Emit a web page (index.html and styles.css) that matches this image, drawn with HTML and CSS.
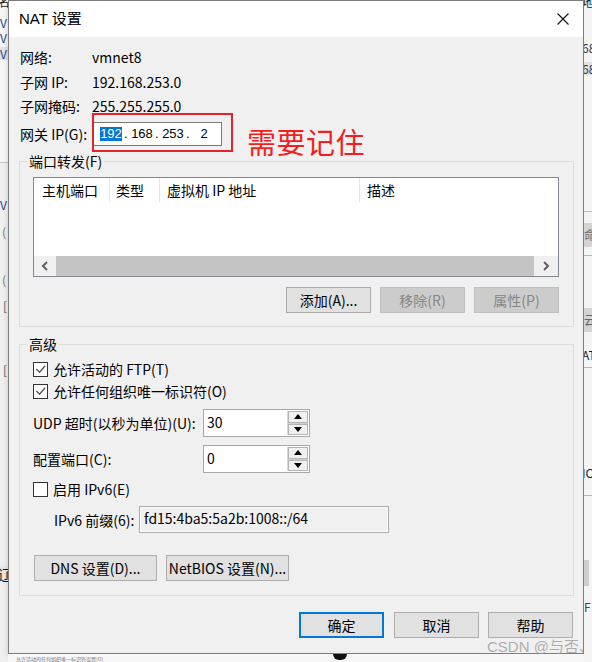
FILE: index.html
```html
<!DOCTYPE html>
<html lang="zh-CN">
<head>
<meta charset="utf-8">
<title>NAT 设置</title>
<link rel="stylesheet" href="styles.css">
</head>
<body>
<div class="desk">
  <div class="side side-l">
    <div class="bgtop">
      <div class="frag fl1">名</div>
      <div class="frag fl2">V</div>
      <div class="frag fl3">V</div>
      <div class="frag fl4 hl">V</div>
    </div>
    <div class="bgrest">
      <div class="frag fl5">V</div>
      <div class="frag fl6">(</div>
      <div class="frag fl7">(</div>
      <div class="frag fl8">[</div>
      <div class="frag fl9">[</div>
      <div class="frag fl10">辽</div>
    </div>
  </div>

  <div class="mid">
    <div class="dialog">
      <div class="titlebar">
        <span class="title">NAT 设置</span>
        <svg class="close" viewBox="0 0 12 12" width="12" height="12"><path d="M0.5 0.5L11.5 11.5M11.5 0.5L0.5 11.5" stroke="#111" stroke-width="1.1" fill="none"/></svg>
      </div>

      <div class="content">
        <div class="info">
          <div class="row r1"><span class="lbl">网络:</span><span>vmnet8</span></div>
          <div class="row r2"><span class="lbl">子网 IP:</span><span>192.168.253.0</span></div>
          <div class="row r3"><span class="lbl">子网掩码:</span><span>255.255.255.0</span></div>
          <div class="row gw">
            <span class="lbl">网关 IP(G):</span>
            <div class="ipwrap">
              <div class="ipbox">
                <span class="ipf"><span class="sel">192</span></span><span class="dot">.</span><span class="ipf">168</span><span class="dot">.</span><span class="ipf">253</span><span class="dot">.</span><span class="ipf">2</span>
              </div>
              <div class="redbox"></div>
              <div class="note">需要记住</div>
            </div>
          </div>
        </div>

        <fieldset class="group pf">
          <legend>端口转发(F)</legend>
          <div class="list">
            <div class="lhead">
              <div class="col c1">主机端口</div>
              <div class="col c2">类型</div>
              <div class="col c3">虚拟机 IP 地址</div>
              <div class="col c4">描述</div>
            </div>
            <div class="lbody"></div>
            <div class="hscroll">
              <div class="arr arr-l"><svg viewBox="0 0 8 10" width="8" height="10"><path d="M6 1L2 5L6 9" stroke="#606060" stroke-width="2" fill="none"/></svg></div>
              <div class="thumb"></div>
              <div class="arr arr-r"><svg viewBox="0 0 8 10" width="8" height="10"><path d="M2 1L6 5L2 9" stroke="#606060" stroke-width="2" fill="none"/></svg></div>
            </div>
          </div>
          <div class="btnrow">
            <button class="btn">添加(A)...</button>
            <button class="btn dis">移除(R)</button>
            <button class="btn dis">属性(P)</button>
          </div>
        </fieldset>

        <fieldset class="group adv">
          <legend>高级</legend>
          <div class="cbrow cb-first">
            <span class="cb on"><svg viewBox="0 0 14 14" width="14" height="14"><path d="M2.5 7L6 10.5L12 3.5" stroke="#555" stroke-width="1.4" fill="none"/></svg></span>
            <span>允许活动的 FTP(T)</span>
          </div>
          <div class="cbrow">
            <span class="cb on"><svg viewBox="0 0 14 14" width="14" height="14"><path d="M2.5 7L6 10.5L12 3.5" stroke="#555" stroke-width="1.4" fill="none"/></svg></span>
            <span>允许任何组织唯一标识符(O)</span>
          </div>
          <div class="frow udp">
            <span class="flbl">UDP 超时(以秒为单位)(U):</span>
            <div class="spin">
              <div class="spin-val">30</div>
              <div class="spin-btns">
                <div class="sb"><svg viewBox="0 0 8 5" width="8" height="5"><path d="M4 0L8 5H0Z" fill="#000"/></svg></div>
                <div class="sb"><svg viewBox="0 0 8 5" width="8" height="5"><path d="M0 0H8L4 5Z" fill="#000"/></svg></div>
              </div>
            </div>
          </div>
          <div class="frow port">
            <span class="flbl">配置端口(C):</span>
            <div class="spin">
              <div class="spin-val">0</div>
              <div class="spin-btns">
                <div class="sb"><svg viewBox="0 0 8 5" width="8" height="5"><path d="M4 0L8 5H0Z" fill="#000"/></svg></div>
                <div class="sb"><svg viewBox="0 0 8 5" width="8" height="5"><path d="M0 0H8L4 5Z" fill="#000"/></svg></div>
              </div>
            </div>
          </div>
          <div class="cbrow ipv6">
            <span class="cb"></span>
            <span>启用 IPv6(E)</span>
          </div>
          <div class="prow">
            <span class="plbl">IPv6 前缀(6):</span>
            <div class="pbox">fd15:4ba5:5a2b:1008::/64</div>
          </div>
          <div class="dnsrow">
            <button class="btn wide">DNS 设置(D)...</button>
            <button class="btn wide">NetBIOS 设置(N)...</button>
          </div>
        </fieldset>

        <div class="footer">
          <button class="btn ok">确定</button>
          <button class="btn">取消</button>
          <button class="btn">帮助</button>
        </div>
      </div>
    </div>
    <div class="bottomstrip">
      <div class="bs-text">允许活动的任何组织唯一标识符设置(O)</div>
      <div class="bs-blob"></div>
    </div>
    <div class="watermark">CSDN @与否、</div>
  </div>

  <div class="side side-r">
    <div class="frag fr1">地</div>
    <div class="frag fr2">68</div>
    <div class="frag fr3 hl">68</div>
    <div class="rline rl1"></div>
    <div class="frag fr4 gb">命</div>
    <div class="rline rl2"></div>
    <div class="frag fr5 gb">云</div>
    <div class="frag fr6">AT</div>
    <div class="rline rl3"></div>
    <div class="frag fr7">IC</div>
    <div class="rline rl4"></div>
    <div class="frag fr8 gb2"></div>
    <div class="frag fr9">F</div>
  </div>
</div>
</body>
</html>
```

FILE: styles.css
```css
* { box-sizing: border-box; }

html, body {
  margin: 0;
  padding: 0;
}

body {
  width: 592px;
  height: 662px;
  overflow: hidden;
  background: #f2f2f2;
  font-family: "Noto Sans CJK SC", "Liberation Sans", sans-serif;
  font-size: 14px;
  color: #000;
}

.desk {
  display: flex;
  width: 592px;
  height: 662px;
}

/* ---------- background window strips ---------- */
.side {
  width: 8px;
  flex: none;
  position: relative;
  overflow: hidden;
  font-size: 12px;
  line-height: 13px;
  color: #1a1a1a;
}

.side-l { background: #f0f0f0; display: flex; flex-direction: column; }
.bgtop { height: 163px; background: #f7f7f7; border-bottom: 1px solid #c8c8c8; position: relative; }
.bgrest { flex: 1; position: relative; }

.frag { position: absolute; white-space: nowrap; }
.fl1 { top: -5px; left: -2px; }
.fl2 { top: 16px; left: 0; color: #1f3f8f; }
.fl3 { top: 31px; left: 0; color: #1f3f8f; }
.fl4 { top: 47px; left: 0; color: #1f3f8f; }
.hl { background: #e2e2e2; width: 12px; }
.fl5 { top: 35px; left: 0; color: #1f3f8f; }
.fl6 { top: 62px; left: 2px; color: #777; }
.fl7 { top: 110px; left: 2px; color: #777; }
.fl8 { top: 136px; left: 3px; color: #555; }
.fl9 { top: 200px; left: 3px; color: #555; }
.fl10 { top: 403px; left: -2px; background: #e8e8e8; font-size: 14px; line-height: 16px; }

.side-r { background: #f4f4f4; }
.fr1 { top: -5px; left: -2px; }
.fr2 { top: 41px; left: -2px; color: #333; }
.fr3 { top: 62px; left: -2px; color: #333; }
.rline { position: absolute; left: 0; width: 8px; height: 1px; background: #b8b8b8; }
.rl1 { top: 211px; }
.rl2 { top: 255px; }
.rl3 { top: 367px; }
.rl4 { top: 495px; }
.gb { background: #d4d4d4; color: #666; width: 8px; height: 24px; padding-top: 5px; }
.fr4 { top: 223px; left: 0; }
.fr5 { top: 308px; left: 0; }
.fr6 { top: 348px; left: -2px; }
.fr7 { top: 466px; left: -2px; }
.gb2 { background: #cfcfcf; width: 5px; height: 26px; }
.fr8 { top: 560px; left: 0; }
.fr9 { top: 600px; left: 0; color: #444; }

/* ---------- dialog ---------- */
.mid {
  width: 576px;
  flex: none;
  display: flex;
  flex-direction: column;
  position: relative;
}

.dialog {
  width: 576px;
  height: 654px;
  flex: none;
  border: 1px solid #7d7d7d;
  background: #f0f0f0;
  display: flex;
  flex-direction: column;
  box-shadow: 0 2px 6px rgba(0, 0, 0, 0.18);
}

.titlebar {
  height: 36px;
  flex: none;
  background: #fff;
  display: flex;
  align-items: center;
  justify-content: space-between;
  padding: 0 14px 0 10px;
}

.title {
  font-family: "Liberation Sans", "Noto Sans CJK SC", sans-serif;
  font-size: 15px;
  line-height: 18px;
}

.close { display: block; }

.content {
  flex: 1;
  padding: 8px 0 0 10px;
  line-height: 18px;
}

/* info rows */
.info { padding-left: 1px; }
.row { display: flex; align-items: center; height: 24px; }
.r2 { height: 25px; }
.lbl { width: 72px; flex: none; }
.gw { margin-top: 4px; }

.ipwrap { position: relative; width: 130px; height: 24px; }
.ipbox {
  width: 130px;
  height: 24px;
  border: 1px solid #7a7a7a;
  background: #fff;
  display: flex;
  align-items: center;
  padding-left: 6px;
  font-family: "Liberation Sans", sans-serif;
  font-size: 13px;
}
.ipf { width: 24px; text-align: center; flex: none; }
.dot { width: 7px; flex: none; padding-left: 1px; }
.sel {
  display: inline-block;
  height: 14px;
  line-height: 14px;
  background: #0078d7;
  color: #fff;
}

.redbox {
  position: absolute;
  left: 0;
  top: -9px;
  width: 141px;
  height: 39px;
  border: 2px solid #e3242b;
}

.note {
  position: absolute;
  left: 155px;
  top: 4px;
  font-size: 29px;
  line-height: 30px;
  color: #f51d1d;
  white-space: nowrap;
  letter-spacing: 0.5px;
}

/* group boxes */
.group {
  margin: 0;
  width: 555px;
  border: 1px solid #dcdcdc;
  padding: 8px 14px 13px 13px;
  min-inline-size: 0;
}
.group legend {
  padding: 0 2px;
  margin-left: -6px;
  line-height: 16px;
}
.pf { margin-top: 7px; }

.list {
  width: 526px;
  height: 100px;
  border: 1px solid #828790;
  background: #fff;
  display: flex;
  flex-direction: column;
}
.lhead { display: flex; height: 24px; flex: none; }
.col {
  border-right: 1px solid #e5e5e5;
  display: flex;
  align-items: center;
  white-space: nowrap;
}
.c1 { width: 76px; padding-left: 8px; }
.c2 { width: 50px; padding-left: 6px; }
.c3 { width: 200px; padding-left: 7px; }
.c4 { flex: 1; padding-left: 7px; border-right: none; }
.lbody { flex: 1; }

.hscroll { display: flex; height: 20px; flex: none; }
.arr {
  background: #f0f0f0;
  display: flex;
  align-items: center;
  justify-content: center;
}
.arr svg { display: block; }
.arr-l { width: 22px; }
.arr-r { width: 24px; }
.thumb { flex: 1; background: #c4c4c4; }

.btnrow {
  display: flex;
  justify-content: flex-end;
  gap: 9px;
  margin-top: 10px;
}

.btn {
  font: inherit;
  font-size: 14px;
  line-height: 18px;
  height: 26px;
  width: 85px;
  padding: 0;
  margin: 0;
  border: 1px solid #adadad;
  background: #e1e1e1;
  color: #000;
  display: flex;
  align-items: center;
  justify-content: center;
  white-space: nowrap;
}
.btn.dis {
  background: #cccccc;
  border-color: #bfbfbf;
  color: #868686;
}

/* advanced */
.adv { margin-top: 9px; padding-top: 6px; padding-bottom: 14px; }

.cbrow { display: flex; align-items: center; height: 22px; }
.cb {
  width: 15px;
  height: 15px;
  flex: none;
  border: 1px solid #333;
  background: #fff;
  margin-right: 5px;
  display: flex;
  align-items: center;
  justify-content: center;
}
.cb svg { display: block; }

.frow { display: flex; align-items: center; height: 28px; margin-top: 7px; }
.port { margin-top: 8px; }
.flbl { width: 170px; flex: none; white-space: nowrap; }

.spin {
  width: 107px;
  height: 28px;
  border: 1px solid #a8a8a8;
  background: #fff;
  display: flex;
  padding: 1px;
}
.spin-val {
  flex: 1;
  padding: 2px 0 0 2px;
  line-height: 18px;
  border-right: 1px solid #d8d8d8;
}
.spin-btns {
  width: 20px;
  display: flex;
  flex-direction: column;
  gap: 1px;
  background: #cfcfcf;
  padding: 0;
}
.sb {
  flex: 1;
  background: #f0f0f0;
  border: 1px solid #b4b4b4;
  display: flex;
  align-items: center;
  justify-content: center;
}
.sb svg { display: block; }

.ipv6 { margin-top: 5px; }

.prow { display: flex; align-items: center; height: 27px; margin-top: 6px; padding-left: 21px; }
.plbl { width: 85px; flex: none; white-space: nowrap; }
.pbox {
  width: 250px;
  height: 27px;
  border: 1px solid #adadad;
  box-shadow: inset 0 0 0 1px #fafafa;
  background: #f0f0f0;
  padding: 2px 0 0 4px;
  line-height: 18px;
}

.dnsrow {
  display: flex;
  gap: 9px;
  margin-top: 22px;
  padding-left: 1px;
}
.btn.wide { width: 123px; }

.footer {
  display: flex;
  justify-content: flex-end;
  gap: 9px;
  margin-top: 16px;
  padding-right: 10px;
}
.btn.ok { border: 2px solid #0078d7; width: 85px; margin-right: 1px; }

/* below dialog */
.bottomstrip {
  flex: 1;
  background: #f7f7f7;
  position: relative;
  overflow: hidden;
}
.bs-text {
  position: absolute;
  left: 8px;
  top: 2px;
  font-size: 5px;
  line-height: 6px;
  color: #777;
  white-space: nowrap;
}
.bs-blob {
  position: absolute;
  left: 325px;
  top: -6px;
  width: 14px;
  height: 12px;
  border-radius: 7px;
  background: #111;
}

.watermark {
  position: absolute;
  left: 479px;
  top: 638px;
  font-family: "Liberation Sans", "Noto Sans CJK SC", sans-serif;
  font-size: 15px;
  line-height: 18px;
  color: rgba(150, 150, 150, 0.75);
  white-space: nowrap;
}
```
